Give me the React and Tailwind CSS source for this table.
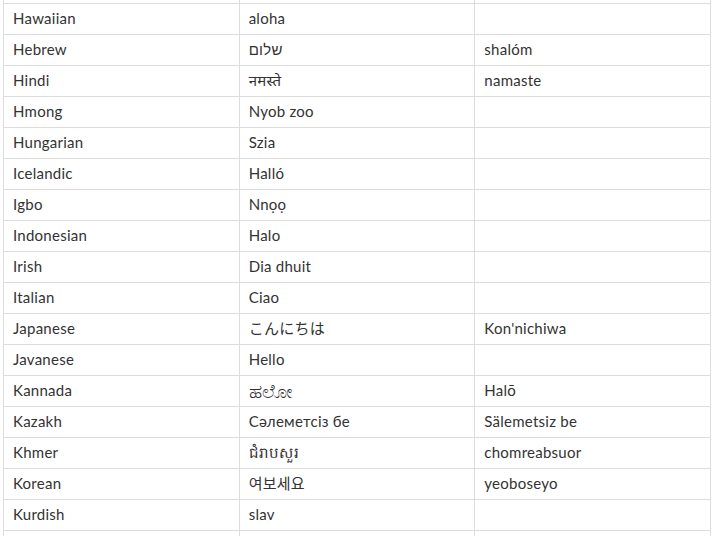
const rows = [
  ["", "", ""],
  ["Hawaiian", "aloha", ""],
  ["Hebrew", "שלום", "shalóm"],
  ["Hindi", "नमस्ते", "namaste"],
  ["Hmong", "Nyob zoo", ""],
  ["Hungarian", "Szia", ""],
  ["Icelandic", "Halló", ""],
  ["Igbo", "Nnọọ", ""],
  ["Indonesian", "Halo", ""],
  ["Irish", "Dia dhuit", ""],
  ["Italian", "Ciao", ""],
  ["Japanese", "こんにちは", "Kon'nichiwa"],
  ["Javanese", "Hello", ""],
  ["Kannada", "ಹಲೋ", "Halō"],
  ["Kazakh", "Сәлеметсіз бе", "Sälemetsiz be"],
  ["Khmer", "ជំរាបសួរ", "chomreabsuor"],
  ["Korean", "여보세요", "yeoboseyo"],
  ["Kurdish", "slav", ""],
  ["", "", ""],
];

const App = () => {
  return (
    <div className="h-[536px] w-[715px] overflow-hidden bg-white font-['Lato','Noto_Sans','Noto_Sans_CJK_JP',sans-serif] text-[15px] tracking-[0.25px] text-[#333]">
      <table className="-mt-[28px] ml-[3px] w-[708px] table-fixed border-collapse">
        <tbody>
          {rows.map((r, n) => (
            <tr key={n} className="h-[31px]">
              {r.map((c, i) => (
                <td
                  key={i}
                  className={
                    c === "ಹಲೋ"
                      ? "border border-[#ddd] px-[9px] pt-0 pb-[1px] text-[19px] leading-[29px] whitespace-nowrap"
                      : "border border-[#ddd] px-[9px] pt-0 pb-[1px] leading-[29px] whitespace-nowrap"
                  }
                >
                  {c}
                </td>
              ))}
            </tr>
          ))}
        </tbody>
      </table>
    </div>
  );
};

export default App;
